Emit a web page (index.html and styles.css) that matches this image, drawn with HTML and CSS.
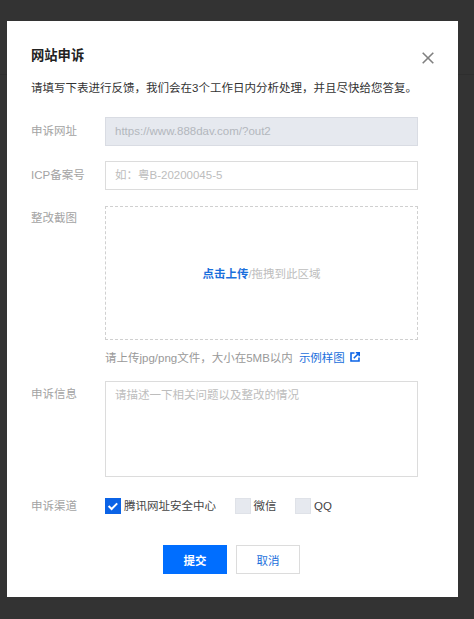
FILE: index.html
```html
<!DOCTYPE html>
<html lang="zh-CN">
<head>
<meta charset="utf-8">
<title>网站申诉</title>
<link rel="stylesheet" href="styles.css">
</head>
<body>
<div class="modal">
  <div class="head">
    <h1 class="title">网站申诉</h1>
    <svg class="close" viewBox="0 0 12 12" width="12" height="12"><path d="M.7.7l10.6 10.6M11.3.7L.7 11.3" fill="none" stroke="#808080" stroke-width="1.6"/></svg>
  </div>
  <p class="desc">请填写下表进行反馈&#xFF0C;我们会在3个工作日内分析处理&#xFF0C;并且尽快给您答复。</p>
  <div class="row">
    <div class="label">申诉网址</div>
    <div class="field input disabled">https://www.888dav.com/?out2</div>
  </div>
  <div class="row">
    <div class="label">ICP备案号</div>
    <div class="field input placeholder">如&#xFF1A;粤B-20200045-5</div>
  </div>
  <div class="row row-upload">
    <div class="label">整改截图</div>
    <div class="field">
      <div class="upload"><span class="link strong">点击上传</span><span class="placeholder">/拖拽到此区域</span></div>
      <div class="hint">请上传jpg/png文件&#xFF0C;大小在5MB以内<span class="link sample">示例样图</span>
        <svg class="ext" viewBox="0 0 10 10" width="10" height="10"><path d="M4.5 1H1v8h8V5.5" fill="none" stroke="#0b63e6" stroke-width="1.6"/><path d="M3.8 6.2L9 1M5.8 .8h3.4v3.4" fill="none" stroke="#0b63e6" stroke-width="1.6"/></svg>
      </div>
    </div>
  </div>
  <div class="row row-message">
    <div class="label">申诉信息</div>
    <div class="field textarea placeholder">请描述一下相关问题以及整改的情况</div>
  </div>
  <div class="row row-channel">
    <div class="label">申诉渠道</div>
    <div class="channels">
      <div class="check"><span class="box on"><svg viewBox="0 0 16 16" width="16" height="16"><path d="M3.6 8l3 3 5.6-5.6" fill="none" stroke="#fff" stroke-width="2"/></svg></span>腾讯网址安全中心</div>
      <div class="check"><span class="box"></span>微信</div>
      <div class="check"><span class="box"></span>QQ</div>
    </div>
  </div>
  <div class="actions">
    <button class="btn primary">提交</button>
    <button class="btn ghost">取消</button>
  </div>
</div>
</body>
</html>
```
FILE: styles.css
```css
* { box-sizing: border-box; }
html, body { margin: 0; height: 100%; }
body {
  background: linear-gradient(#333 0 74px, #2e2e2e 74px 75px, #333 75px);
  padding: 21px 16px 0 7px;
  font-family: "Liberation Sans", "Noto Sans CJK SC", sans-serif;
  font-size: 11.5px;
  color: #333;
  overflow: hidden;
}
.modal {
  width: 451px;
  height: 576px;
  background: #fff;
  padding: 26px 40px 0 24px;
}
.head { display: flex; justify-content: space-between; align-items: flex-start; height: 19px; margin-right: -16px; }
.title { margin: 0; font-size: 13.3px; line-height: 18px; font-weight: 700; color: #222; }
.close { margin-top: 5px; }
.desc { margin: 13px 0 0; line-height: 18px; width: 400px; color: #333; white-space: nowrap; }
.row { display: flex; margin-top: 15px; }
.desc + .row { margin-top: 20px; }
.label { width: 74px; flex: none; line-height: 28px; color: #a3a3a3; }
.field { width: 313px; }
.input { height: 29px; line-height: 27px; border: 1px solid #dcdcdc; padding: 0 9px; }
.disabled { background: #e6e9ef; border-color: #d9dce3; color: #b3b7bd; }
.placeholder { color: #bdbdbd; }
.upload {
  height: 134px;
  border: 1px dashed #d0d0d0;
  display: flex; align-items: center; justify-content: center;
}
.link { color: #1a6fdc; }
.strong { font-weight: 700; }
.hint { display: flex; align-items: center; height: 18px; margin-top: 8px; color: #999; }
.sample { margin-left: 6px; }
.ext { margin-left: 5px; }
.row-upload { margin-top: 16px; }
.row-upload .label { line-height: 24px; }
.row-message { margin-top: 15px; }
.row-message .label { line-height: 26px; }
.textarea { height: 96px; border: 1px solid #dcdcdc; padding: 4px 9px; line-height: 18px; }
.row-channel { margin-top: 21px; align-items: center; height: 16px; }
.row-channel .label { line-height: 16px; }
.channels { display: flex; gap: 18.5px; }
.check { display: flex; align-items: center; gap: 3px; line-height: 16px; color: #444; }
.box { width: 16px; height: 16px; background: #e6e9ef; border: 1px solid #dfe2e8; flex: none; display: block; }
.box.on { background: #0b63e6; border: 0; }
.box svg { display: block; }
.actions { display: flex; gap: 9px; margin-top: 31px; padding-left: 132px; }
.btn { width: 64px; height: 29px; font: inherit; font-weight: 700; padding: 0; border: 1px solid; }
.primary { background: #006eff; border-color: #006eff; color: #fff; }
.ghost { background: #fff; border-color: #dcdcdc; color: #1a6fdc; font-weight: 400; }
```
